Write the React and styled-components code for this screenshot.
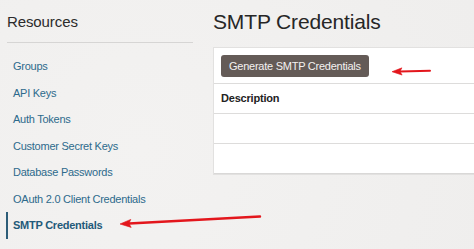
import React from "react";
import styled, { createGlobalStyle } from "styled-components";

const GlobalStyle = createGlobalStyle`
  html, body {
    margin: 0;
    padding: 0;
    background: #f1f0ef;
    overflow: hidden;
  }
  body {
    font-family: "Liberation Sans", Arial, sans-serif;
  }
`;

const Page = styled.div`
  position: relative;
  width: 474px;
  height: 249px;
  display: flex;
  overflow: hidden;
  background: radial-gradient(circle at 30% 60%, #f3f2f1 0%, #efeeed 100%);
`;

const Sidebar = styled.nav`
  width: 187px;
  padding-left: 6px;
  flex-shrink: 0;
`;

const SideTitle = styled.h2`
  margin: 13px 0 0 1px;
  font-size: 15px;
  line-height: 18px;
  font-weight: normal;
  letter-spacing: -0.1px;
  color: #2b2b2b;
`;

const Divider = styled.div`
  height: 1px;
  margin: 11px 0 10px 1px;
  background: #d6d5d4;
`;

const NavList = styled.ul`
  list-style: none;
  margin: 0;
  padding: 0;
`;

const NavItem = styled.li`
  height: 26.5px;
  line-height: 26.5px;
  padding-left: 5px;
  border-left: 2px solid ${(p) => (p.$active ? "#2d5d78" : "transparent")};
  font-size: 11px;
  letter-spacing: -0.25px;
  font-weight: ${(p) => (p.$active ? "bold" : "normal")};
  color: ${(p) => (p.$active ? "#1f5a7a" : "#2d6a8c")};
  white-space: nowrap;
`;

const Main = styled.main`
  flex: 1;
  margin-left: 20px;
  min-width: 0;
`;

const Title = styled.h1`
  margin: 10px 0 13px;
  font-size: 21px;
  line-height: 24px;
  font-weight: normal;
  letter-spacing: -0.15px;
  color: #262626;
  white-space: nowrap;
`;

const Card = styled.section`
  width: calc(100% + 20px);
  background: #fff;
  border: 1px solid #e2e1e0;
  border-right: none;
  box-sizing: border-box;
`;

const Toolbar = styled.div`
  padding: 7px 7px 6px;
  border-bottom: 1px solid #dddcdb;
`;

const Button = styled.button`
  height: 22px;
  padding: 0 8px;
  border: none;
  border-radius: 3px;
  background: #645b57;
  color: #f4f2f1;
  font-family: inherit;
  font-size: 11px;
  letter-spacing: -0.25px;
  line-height: 22px;
  cursor: pointer;
`;

const Row = styled.div`
  height: 29px;
  line-height: 29px;
  padding-left: 7px;
  border-bottom: 1px solid #dddcdb;
  font-size: 11px;
  letter-spacing: -0.2px;
  font-weight: ${(p) => (p.$head ? "bold" : "normal")};
  color: #222;

  &:last-child {
    border-bottom-color: #d9d8d7;
  }
`;

const Overlay = styled.svg`
  position: absolute;
  left: 0;
  top: 0;
  pointer-events: none;
`;

function Arrow({ from, to, width = 2, head = 10, spread = 3.6 }) {
  const dx = to[0] - from[0];
  const dy = to[1] - from[1];
  const len = Math.hypot(dx, dy);
  const ux = dx / len;
  const uy = dy / len;
  const bx = to[0] - ux * head;
  const by = to[1] - uy * head;
  const pts = [
    `${to[0]},${to[1]}`,
    `${bx - uy * spread},${by + ux * spread}`,
    `${bx + ux * 2},${by + uy * 2}`,
    `${bx + uy * spread},${by - ux * spread}`,
  ].join(" ");
  return (
    <g fill="#e3161c" stroke="#e3161c">
      <line
        x1={from[0]}
        y1={from[1]}
        x2={bx + ux * 2}
        y2={by + uy * 2}
        strokeWidth={width}
        strokeLinecap="round"
      />
      <polygon points={pts} strokeWidth="0.6" strokeLinejoin="round" />
    </g>
  );
}

const items = [
  "Groups",
  "API Keys",
  "Auth Tokens",
  "Customer Secret Keys",
  "Database Passwords",
  "OAuth 2.0 Client Credentials",
  "SMTP Credentials",
];

export default function App() {
  return (
    <>
      <GlobalStyle />
      <Page>
        <Sidebar>
          <SideTitle>Resources</SideTitle>
          <Divider />
          <NavList>
            {items.map((item) => (
              <NavItem key={item} $active={item === "SMTP Credentials"}>
                {item}
              </NavItem>
            ))}
          </NavList>
        </Sidebar>
        <Main>
          <Title>SMTP Credentials</Title>
          <Card>
            <Toolbar>
              <Button>Generate SMTP Credentials</Button>
            </Toolbar>
            <Row $head>Description</Row>
            <Row />
            <Row />
          </Card>
        </Main>
        <Overlay width="474" height="249">
          <Arrow from={[430, 70.8]} to={[392, 71.7]} />
          <Arrow from={[260, 216.5]} to={[120, 224]} width={2.4} head={11} spread={4} />
        </Overlay>
      </Page>
    </>
  );
}
